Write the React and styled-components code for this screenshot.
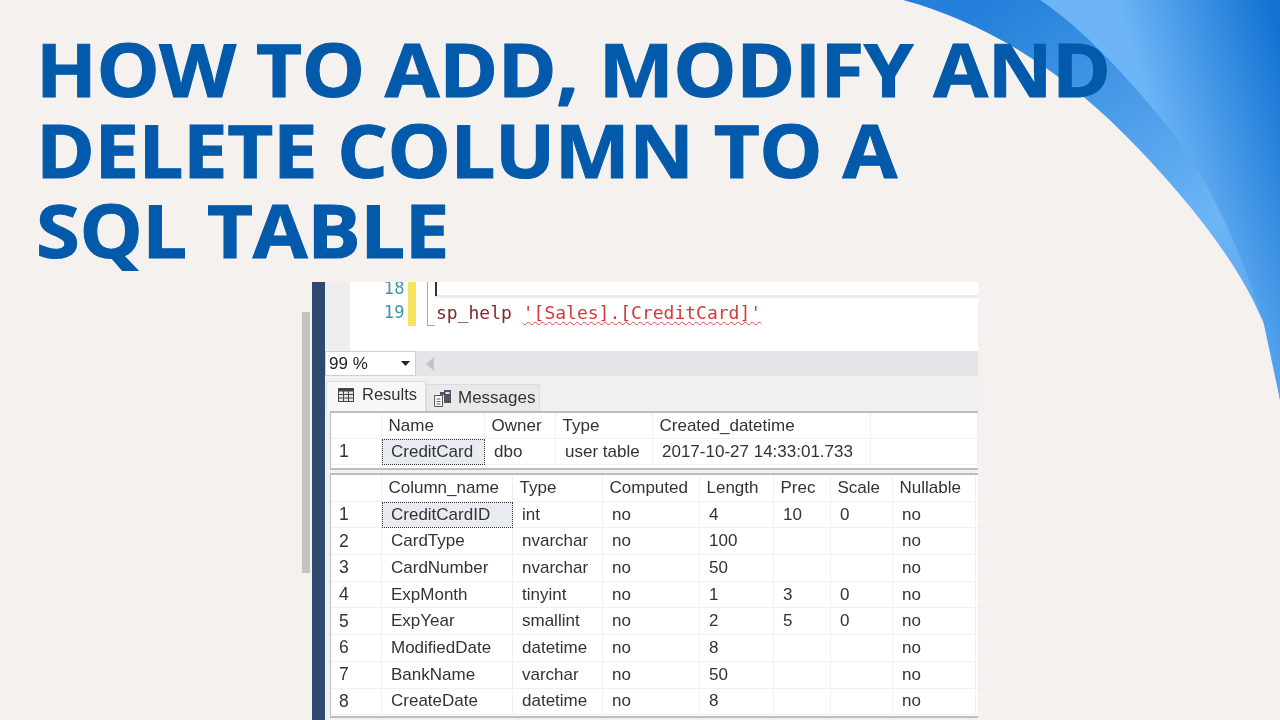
import React from "react";
import styled, { createGlobalStyle } from "styled-components";

const Global = createGlobalStyle`
  html, body { margin: 0; padding: 0; background: #f4f1ee; }
  * { box-sizing: border-box; }
`;

const Page = styled.div`
  position: relative;
  width: 1280px;
  height: 720px;
  overflow: hidden;
  background: #f4f1ee;
  display: flex;
  flex-direction: column;
`;

const Swoosh = styled.svg`
  position: absolute;
  top: 0;
  right: 0;
  width: 400px;
  height: 720px;
`;

const Title = styled.h1`
  position: relative;
  margin: 0;
  height: 282px;
  padding: 29px 0 0 36px;
  font-family: "Open Sans", sans-serif;
  font-weight: 700;
  font-size: 73px;
  line-height: 80.5px;
  letter-spacing: -0.4px;
  -webkit-text-stroke: 1px #0359aa;
  color: #0359aa;
  white-space: nowrap;
`;

const TitleText = styled.span`
  display: inline-block;
  transform: scaleX(1.09);
  transform-origin: left top;
`;

const Shot = styled.div`
  position: relative;
  display: flex;
  height: 438px;
  padding-left: 302px;
`;

const OuterScroll = styled.div`
  width: 8px;
  height: 261px;
  margin: 30px 2px 0 0;
  background: #c5c3c1;
`;

const NavyBar = styled.div`
  width: 13px;
  background: #2f4a70;
`;

const Main = styled.div`
  width: 653px;
  display: flex;
  flex-direction: column;
  background: #f0f0f0;
  filter: blur(0.35px);
`;

const Editor = styled.div`
  height: 69px;
  display: flex;
  background: #fff;
`;

const Gutter = styled.div`
  width: 25px;
  background: #eeeeee;
`;

const Lines = styled.div`
  flex: 1;
  display: flex;
  flex-direction: column;
`;

const CodeLine = styled.div`
  display: flex;
  height: ${(p) => p.$h}px;
  overflow: hidden;
  align-items: flex-end;
`;

const LineNo = styled.div`
  width: 55px;
  height: 100%;
  display: flex;
  justify-content: flex-end;
  align-items: flex-end;
  padding-bottom: ${(p) => p.$pb}px;
  font-family: "DejaVu Sans Mono", monospace;
  font-size: 17px;
  line-height: 20px;
  color: #3f93ad;
  letter-spacing: 0.4px;
`;

const ChangeBar = styled.div`
  width: 8px;
  height: 100%;
  margin-left: 3px;
  background: #f8e45c;
`;

const Outline = styled.div`
  width: 8px;
  height: 100%;
  margin-left: 11px;
  border-left: 1.5px solid #a9a9a9;
  border-bottom: ${(p) => (p.$end ? "1.5px solid #a9a9a9" : "0")};
`;

const CurrentLine = styled.div`
  flex: 1;
  height: 100%;
  border-bottom: 3px solid #ececec;
  display: flex;
  align-items: stretch;
`;

const Caret = styled.div`
  width: 2px;
  height: 14px;
  background: #333;
`;

const CodeText = styled.div`
  flex: 1;
  height: 100%;
  padding: 3px 0 0 1px;
  font-family: "DejaVu Sans Mono", monospace;
  font-size: 18px;
  line-height: 24px;
  white-space: nowrap;
  color: #7c2a2a;
`;

const Str = styled.span`
  color: #d3383c;
  text-decoration: underline wavy #e0474a 1px;
  text-underline-offset: 2px;
`;

const ZoomBar = styled.div`
  height: 25px;
  display: flex;
  align-items: center;
  background: #e6e6ea;
`;

const ZoomCombo = styled.div`
  width: 91px;
  height: 25px;
  display: flex;
  align-items: center;
  justify-content: space-between;
  padding: 0 5px 0 3px;
  background: #fff;
  border: 1px solid #cfcfd6;
  font-family: "Liberation Sans", sans-serif;
  font-size: 17px;
  color: #222;
`;

const Tabs = styled.div`
  height: 35px;
  display: flex;
  align-items: flex-end;
  padding-left: 1px;
  background: #f0f0f0;
`;

const Tab = styled.div`
  height: ${(p) => (p.$active ? 30 : 27)}px;
  width: ${(p) => (p.$active ? 100 : 114)}px;
  display: flex;
  align-items: center;
  gap: ${(p) => (p.$active ? 8 : 6)}px;
  padding-left: ${(p) => (p.$active ? 11 : 6)}px;
  padding-bottom: ${(p) => (p.$active ? 4 : 0)}px;
  background: ${(p) => (p.$active ? "#f8f8f8" : "#e9e9e9")};
  border: 1px solid #dcdcdc;
  border-bottom: 0;
  font-family: "Liberation Sans", sans-serif;
  font-size: ${(p) => (p.$active ? 16.5 : 17)}px;
  color: #333;
`;

const ResultPane = styled.div`
  flex: 1;
  display: flex;
  flex-direction: column;
  padding-left: 5px;
  background: #f0f0f0;
`;

const TableBox = styled.div`
  display: grid;
  grid-template-columns: ${(p) => p.$cols};
  grid-auto-rows: ${(p) => p.$row}px;
  height: ${(p) => p.$h}px;
  margin-bottom: ${(p) => p.$mb || 0}px;
  background: #fff;
  border-top: 2px solid #bdbdbd;
  border-left: 1px solid #bdbdbd;
  border-bottom: 2px solid #bdbdbd;
  font-family: "Liberation Sans", sans-serif;
  font-size: 17px;
  color: #333;
`;

const Cell = styled.div`
  display: flex;
  align-items: center;
  white-space: nowrap;
  overflow: hidden;
  padding-left: ${(p) => (p.$head ? 6.5 : 9)}px;
  border-right: 1px solid #f0f0f0;
  border-bottom: 1px solid #f0f0f0;
  ${(p) =>
    p.$selected &&
    `background: #e8ebf0; outline: 1px dotted #333; outline-offset: -1px;`}
`;

const RowNum = styled(Cell)`
  padding-left: 8px;
  font-size: 17.5px;
`;

const columnsA = ["", "Name", "Owner", "Type", "Created_datetime"];
const rowA = ["1", "CreditCard", "dbo", "user table", "2017-10-27 14:33:01.733"];

const columnsB = ["", "Column_name", "Type", "Computed", "Length", "Prec", "Scale", "Nullable"];
const rowsB = [
  ["1", "CreditCardID", "int", "no", "4", "10", "0", "no"],
  ["2", "CardType", "nvarchar", "no", "100", "", "", "no"],
  ["3", "CardNumber", "nvarchar", "no", "50", "", "", "no"],
  ["4", "ExpMonth", "tinyint", "no", "1", "3", "0", "no"],
  ["5", "ExpYear", "smallint", "no", "2", "5", "0", "no"],
  ["6", "ModifiedDate", "datetime", "no", "8", "", "", "no"],
  ["7", "BankName", "varchar", "no", "50", "", "", "no"],
  ["8", "CreateDate", "datetime", "no", "8", "", "", "no"],
];

function DataGrid({ cols, rowH, h, mb, head, rows }) {
  return (
    <TableBox $cols={cols} $row={rowH} $h={h} $mb={mb}>
      {head.map((c, i) => (
        <Cell key={i} $head>{c}</Cell>
      ))}
      {rows.map((r, ri) =>
        r.map((c, i) =>
          i === 0 ? (
            <RowNum key={ri + "-" + i}>{c}</RowNum>
          ) : (
            <Cell key={ri + "-" + i} $selected={ri === 0 && i === 1}>{c}</Cell>
          )
        )
      )}
    </TableBox>
  );
}

const GridIcon = () => (
  <svg width="16" height="14" viewBox="0 0 16 14">
    <rect x="0.5" y="0.5" width="15" height="13" fill="#e8e8e8" stroke="#444" />
    <rect x="0.5" y="0.5" width="15" height="3" fill="#444" />
    <path d="M5.5 1v12M10.5 1v12M1 6.5h14M1 10h14" stroke="#444" fill="none" />
  </svg>
);

const MessageIcon = () => (
  <svg width="19" height="19" viewBox="0 0 19 19">
    <path d="M1.5 6.5h8v11h-8z" fill="#fff" stroke="#555" />
    <path d="M3.5 10h4M3.5 12.5h4M3.5 15h4" stroke="#555" fill="none" />
    <rect x="11" y="1" width="7" height="13" fill="#4d5560" />
    <rect x="12.5" y="3" width="4" height="2" fill="#dfe3e8" />
    <rect x="7" y="3" width="4" height="3" fill="#4d5560" />
  </svg>
);

const DropArrow = () => (
  <svg width="9" height="6" viewBox="0 0 9 6">
    <path d="M0 0h9L4.5 5z" fill="#222" />
  </svg>
);

const ScrollLeft = styled.svg`
  margin-left: 9px;
`;

export default function App() {
  return (
    <Page>
      <Global />
      <Swoosh viewBox="880 0 400 720">
        <defs>
          <linearGradient id="outerG" x1="1000" y1="0" x2="1280" y2="400" gradientUnits="userSpaceOnUse">
            <stop offset="0" stopColor="#2480da" />
            <stop offset="0.62" stopColor="#6db5f6" />
            <stop offset="1" stopColor="#4a9bea" />
          </linearGradient>
          <linearGradient id="innerG" x1="1115" y1="0" x2="1256" y2="-44" gradientUnits="userSpaceOnUse">
            <stop offset="0" stopColor="#6db5f6" />
            <stop offset="1" stopColor="#1272d3" />
          </linearGradient>
        </defs>
        <path d="M903 0 C985 22 1060 70 1123 133 C1175 185 1225 245 1253 300 L1267 330 C1273 350 1277 375 1280 400 L1280 0 Z" fill="url(#outerG)" />
        <path d="M1040 0 C1085 30 1130 80 1173 133 C1205 175 1235 235 1263 320 L1280 400 L1280 0 Z" fill="url(#innerG)" />
      </Swoosh>
      <Title>
        <TitleText>
          HOW TO ADD, MODIFY AND
          <br />
          DELETE COLUMN TO A
          <br />
          SQL TABLE
        </TitleText>
      </Title>
      <Shot>
        <OuterScroll />
        <NavyBar />
        <Main>
          <Editor>
            <Gutter />
            <Lines>
              <CodeLine $h={16}>
                <LineNo $pb={0}>18</LineNo>
                <ChangeBar />
                <Outline />
                <CurrentLine><Caret /></CurrentLine>
              </CodeLine>
              <CodeLine $h={28}>
                <LineNo $pb={4}>19</LineNo>
                <ChangeBar />
                <Outline $end />
                <CodeText>
                  sp_help <Str>'[Sales].[CreditCard]'</Str>
                </CodeText>
              </CodeLine>
            </Lines>
          </Editor>
          <ZoomBar>
            <ZoomCombo>
              99 %
              <DropArrow />
            </ZoomCombo>
            <ScrollLeft width="9" height="14" viewBox="0 0 9 14">
              <path d="M9 0v14L1 7z" fill="#c4c4c8" />
            </ScrollLeft>
          </ZoomBar>
          <Tabs>
            <Tab $active><GridIcon />Results</Tab>
            <Tab><MessageIcon />Messages</Tab>
          </Tabs>
          <ResultPane>
            <DataGrid
              cols="51px 103px 71px 97px 218px 1fr"
              rowH={26}
              h={59}
              mb={3}
              head={[...columnsA, ""]}
              rows={[[...rowA, ""]]}
            />
            <DataGrid
              cols="51px 131px 90px 97px 74px 57px 62px 83px 1fr"
              rowH={26.7}
              h={245}
              head={[...columnsB, ""]}
              rows={rowsB.map((r) => [...r, ""])}
            />
          </ResultPane>
        </Main>
      </Shot>
    </Page>
  );
}
